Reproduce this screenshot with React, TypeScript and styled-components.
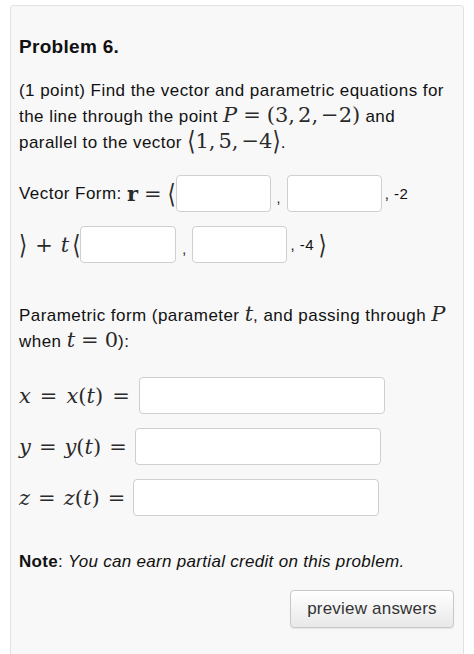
import React from "react";
import styled, { createGlobalStyle } from "styled-components";

const Global = createGlobalStyle`
  html, body { margin: 0; padding: 0; background: #ffffff; }
  body { font-family: "Liberation Sans", Arial, sans-serif; color: #111; }
`;

const Card = styled.div`
  margin: 5px 0 0 10px;
  width: 454px;
  height: 660px;
  box-sizing: border-box;
  background: #f8f8f8;
  border: 1px solid #e2e2e2;
  border-bottom: none;
  border-radius: 4px 4px 0 0;
  padding: 30px 8px 0 8px;
  font-size: 17px;
  letter-spacing: 0.45px;
`;

const Title = styled.h2`
  margin: 0;
  font-size: 19px;
  font-weight: bold;
  line-height: 22px;
  letter-spacing: 0.3px;
`;

const Para = styled.p`
  margin: 20px 0 0 0;
  line-height: 25px;
`;

const M = styled.span<{ $bold?: boolean; $italic?: boolean }>`
  font-family: "DejaVu Serif", "Liberation Serif", serif;
  font-size: 21px;
  letter-spacing: 0;
  color: #2a2a2a;
  font-weight: 300;
  font-style: ${(p) => (p.$italic ? "italic" : "normal")};
  ${(p) => (p.$bold ? "font-weight: bold;" : "")}
`;

const Rel = styled.span<{ $m?: number }>`
  margin: 0 ${(p) => p.$m ?? 6}px;
`;

const Num = styled.span`
  margin-right: 3px;
`;

const Angle = styled.span<{ $after?: number }>`
  display: inline-block;
  transform: scaleY(1.25);
  font-weight: 200;
  margin-left: ${(p) => p.$after ?? 0}px;
`;

const VectorBlock = styled.div`
  margin-top: 20px;
  display: flex;
  flex-direction: column;
  gap: 14px;
`;

const Row = styled.div`
  display: flex;
  align-items: center;
  white-space: pre;
`;

const Box = styled.span<{ $w: number }>`
  display: inline-block;
  width: ${(p) => p.$w}px;
  height: 37px;
  box-sizing: border-box;
  background: #fff;
  border: 1px solid #cfcfcf;
  border-radius: 4px;
`;

const Sep = styled.span`
  width: 16px;
  text-align: center;
  font-size: 14px;
  align-self: flex-end;
  padding-bottom: 6px;
`;

const Small = styled.span`
  font-size: 15px;
  margin-left: 3px;
`;

const Para2 = styled.p`
  margin: 39px 0 0 0;
  line-height: 25px;
`;

const EqBlock = styled.div`
  margin-top: 23px;
  display: flex;
  flex-direction: column;
  gap: 14px;
`;

const Note = styled.p`
  margin: 35px 0 0 0;
  line-height: 22px;
  letter-spacing: 0.3px;
`;

const BtnRow = styled.div`
  display: flex;
  justify-content: flex-end;
  margin-top: 17px;
  padding-right: 1px;
`;

const Button = styled.button`
  width: 164px;
  height: 38px;
  font-family: "Liberation Sans", Arial, sans-serif;
  font-size: 17px;
  letter-spacing: 0.2px;
  color: #333;
  background: linear-gradient(#ffffff, #e8e8e8);
  border: 1px solid #c8c8c8;
  border-radius: 4px;
  box-shadow: 0 1px 1px rgba(0, 0, 0, 0.08);
`;

const EqLabel = ({ v, m }: { v: string; m: number }) => (
  <M>
    <i>{v}</i>
    <Rel $m={m}>=</Rel>
    <i>{v}</i>(<i>t</i>)<Rel $m={m}>=</Rel>
  </M>
);

export default function App() {
  return (
    <>
      <Global />
      <Card>
        <Title>Problem 6.</Title>
        <Para>
          (1 point) Find the vector and parametric equations for the line through the point{" "}
          <M>
            <i>P</i>
            <Rel>=</Rel>(<Num>3,</Num>
            <Num>2,</Num>−2)
          </M>{" "}
          and parallel to the vector{" "}
          <M>
            <Angle>⟨</Angle>
            <Num>1,</Num>
            <Num>5,</Num>−4<Angle>⟩</Angle>
          </M>
          .
        </Para>
        <VectorBlock>
          <Row>
            Vector Form: <M $bold>r</M>
            <M>
              <Rel>=</Rel>
              <Angle>⟨</Angle>
            </M>
            <Box $w={95} />
            <Sep>,</Sep>
            <Box $w={95} />
            <Small>, -2</Small>
          </Row>
          <Row>
            <M>
              <Angle>⟩</Angle>
              <Rel $m={8}>+</Rel>
              <i>t</i>
              <Angle $after={3}>⟨</Angle>
            </M>
            <Box $w={96} />
            <Sep>,</Sep>
            <Box $w={95} />
            <Small>, -4 </Small>
            <M>
              <Angle>⟩</Angle>
            </M>
          </Row>
        </VectorBlock>
        <Para2>
          Parametric form (parameter <M $italic>t</M>, and passing through <M $italic>P</M> when{" "}
          <M>
            <i>t</i>
            <Rel>=</Rel>0
          </M>
          ):
        </Para2>
        <EqBlock>
          <Row>
            <EqLabel v="x" m={9} />
            <Box $w={246} />
          </Row>
          <Row>
            <EqLabel v="y" m={8} />
            <Box $w={246} />
          </Row>
          <Row>
            <EqLabel v="z" m={8} />
            <Box $w={246} />
          </Row>
        </EqBlock>
        <Note>
          <b>Note</b>: <i>You can earn partial credit on this problem.</i>
        </Note>
        <BtnRow>
          <Button>preview answers</Button>
        </BtnRow>
      </Card>
    </>
  );
}
